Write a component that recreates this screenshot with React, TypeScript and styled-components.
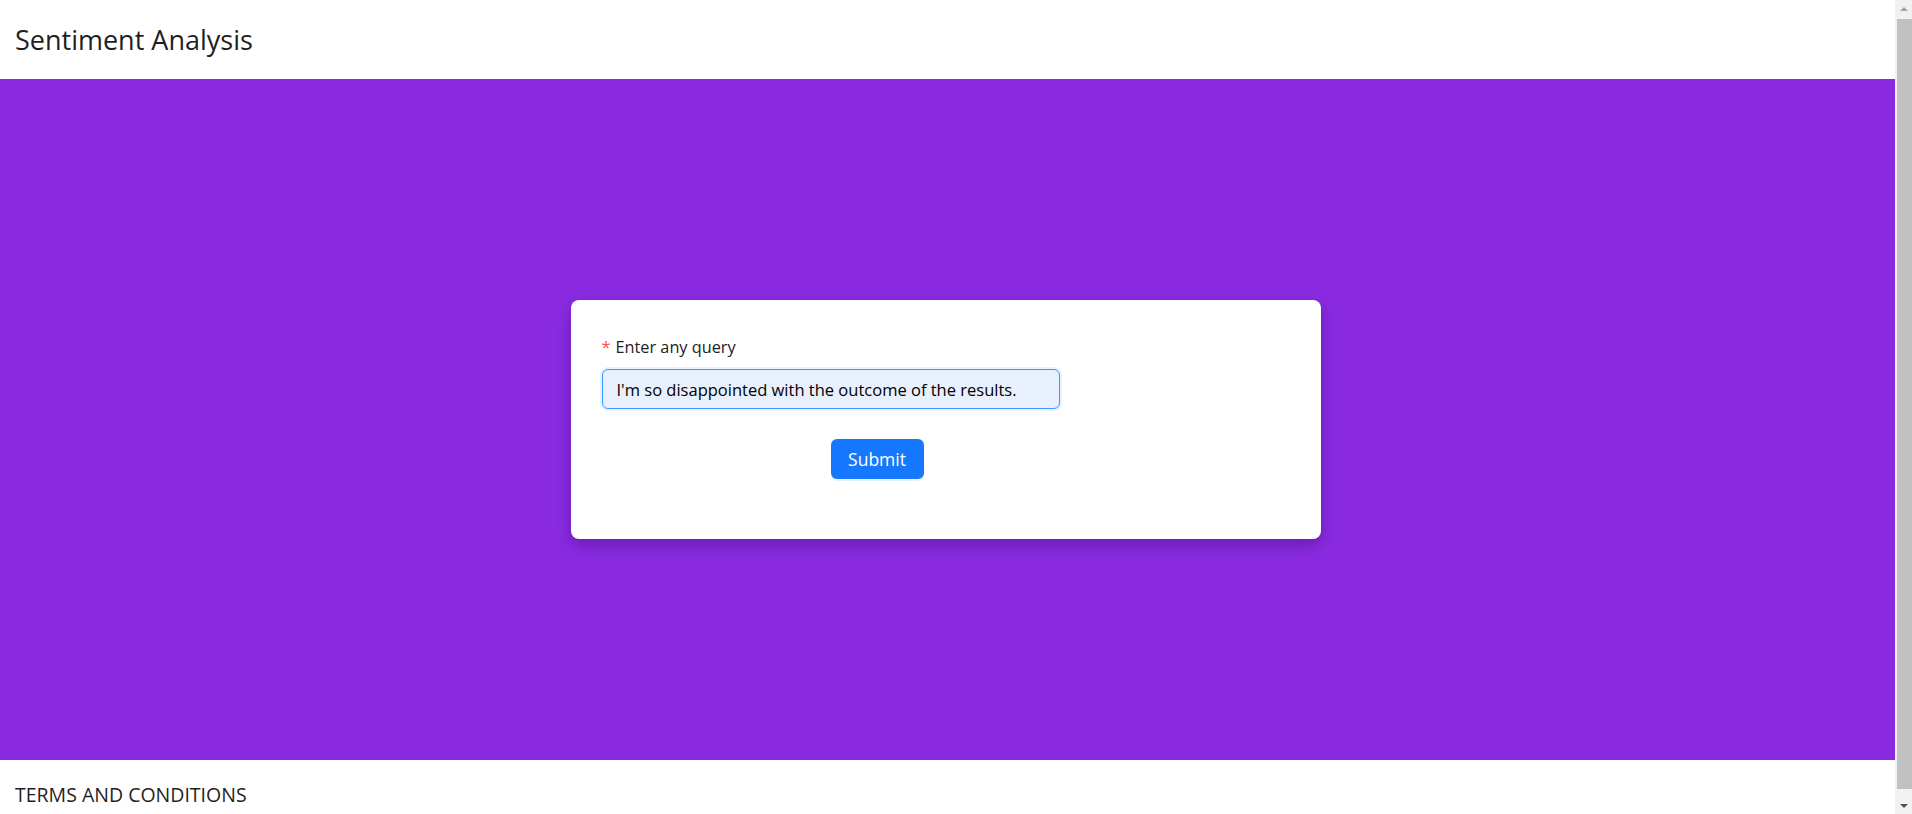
import styled, { createGlobalStyle } from 'styled-components';

const GlobalStyle = createGlobalStyle`
  html, body {
    margin: 0;
    padding: 0;
    overflow: hidden;
  }

  body {
    font-family: "Open Sans", "Noto Sans", "Liberation Sans", sans-serif;
    color: #1f1f1f;
    background: #ffffff;
  }
`;

const App = () => {
  return (
    <>
      <GlobalStyle />
      <Page>
        <Content>
          <Header>
            <Title>Sentiment Analysis</Title>
          </Header>
          <Main>
            <Card>
              <Form onSubmit={(e) => e.preventDefault()}>
                <Label htmlFor="query">
                  <Required>*</Required>
                  Enter any query
                </Label>
                <Input
                  id="query"
                  type="text"
                  defaultValue="I'm so disappointed with the outcome of the results."
                />
                <Actions>
                  <Button type="submit">Submit</Button>
                </Actions>
              </Form>
            </Card>
          </Main>
          <Footer>
            <FooterText>TERMS AND CONDITIONS</FooterText>
          </Footer>
        </Content>
        <ScrollTrack>
          <ScrollArrow $dir="up" />
          <ScrollThumb />
          <ScrollArrow $dir="down" />
        </ScrollTrack>
      </Page>
    </>
  );
};

const Page = styled.div`
  display: flex;
  height: 814px;
  overflow: hidden;
`;

const Content = styled.div`
  flex: 1;
  min-width: 0;
  display: flex;
  flex-direction: column;
`;

const Header = styled.header`
  height: 79px;
  flex-shrink: 0;
  padding: 0 15px;
  display: flex;
  align-items: center;
  background: #ffffff;
`;

const Title = styled.h1`
  margin: 0;
  font-size: 27px;
  font-weight: 400;
  color: #1f1f1f;
`;

const Main = styled.main`
  height: 681px;
  flex-shrink: 0;
  box-sizing: border-box;
  padding-right: 4px;
  background: #8a2be2;
  display: flex;
  align-items: center;
  justify-content: center;
`;

const Card = styled.div`
  width: 750px;
  height: 239px;
  box-sizing: border-box;
  padding: 35px 31px;
  background: #ffffff;
  border-radius: 8px;
  box-shadow: 0 6px 16px rgba(40, 0, 80, 0.35);
`;

const Form = styled.form`
  display: flex;
  flex-direction: column;
`;

const Label = styled.label`
  display: flex;
  align-items: center;
  height: 24px;
  font-size: 16.3px;
  color: #222222;
  margin-bottom: 10px;
`;

const Required = styled.span`
  color: #ff4d4f;
  margin-right: 5px;
`;

const Input = styled.input`
  width: 458px;
  height: 40px;
  box-sizing: border-box;
  padding: 0 14px;
  font-family: inherit;
  font-size: 16.5px;
  color: #000000;
  background: #e8f0fe;
  border: 1px solid #4096ff;
  border-radius: 6px;
  box-shadow: 0 0 0 2px rgba(5, 145, 255, 0.1);
  outline: none;
`;

const Actions = styled.div`
  display: flex;
  padding-left: 229px;
  margin-top: 30px;
`;

const Button = styled.button`
  width: 93px;
  height: 40px;
  border: none;
  border-radius: 6px;
  background: #1677ff;
  color: #ffffff;
  font-family: inherit;
  font-size: 17.5px;
  cursor: pointer;
  box-shadow: 0 2px 0 rgba(5, 145, 255, 0.1);
`;

const Footer = styled.footer`
  flex: 1;
  padding: 21px 15px 0;
  display: flex;
  align-items: flex-start;
  background: #ffffff;
`;

const FooterText = styled.span`
  font-size: 19.5px;
  line-height: 28px;
  color: #1f1f1f;
`;

const ScrollTrack = styled.div`
  width: 17px;
  flex-shrink: 0;
  display: flex;
  flex-direction: column;
  background: #f1f1f1;
`;

const ScrollArrow = styled.div<{ $dir: 'up' | 'down' }>`
  height: 17px;
  display: flex;
  align-items: center;
  justify-content: center;

  &::before {
    content: '';
    width: 0;
    height: 0;
    border-left: 4px solid transparent;
    border-right: 4px solid transparent;
    ${({ $dir }) =>
      $dir === 'up'
        ? 'border-bottom: 4px solid #a3a3a3;'
        : 'border-top: 4px solid #505050;'}
  }
`;

const ScrollThumb = styled.div`
  flex: 1;
  margin: 2px 0 8px 2px;
  background: #c1c1c1;
`;

export default App;
